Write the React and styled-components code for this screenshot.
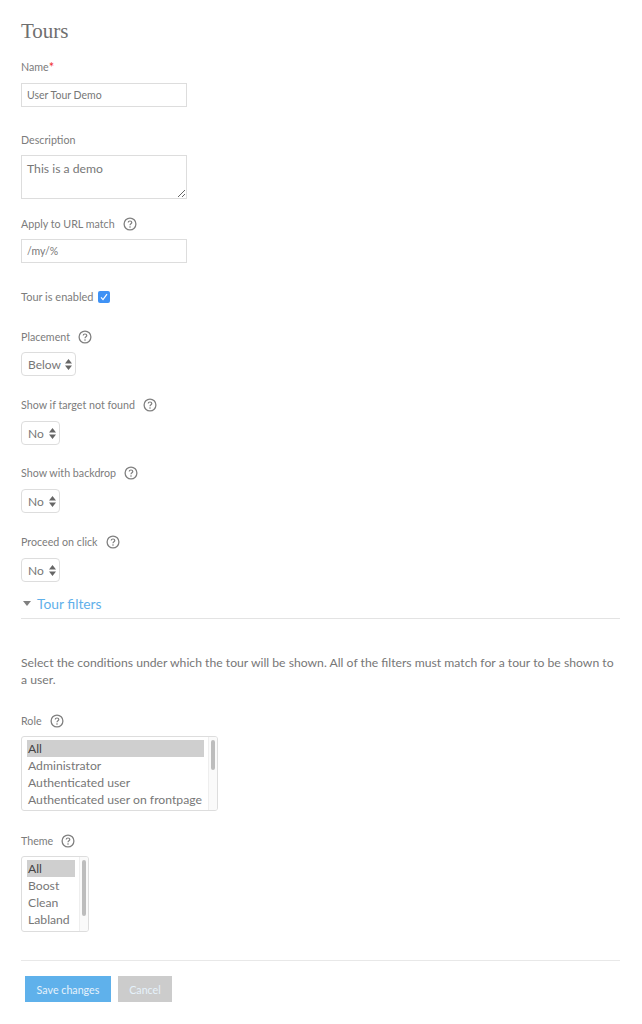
import React from "react";
import styled, { createGlobalStyle } from "styled-components";

const GlobalStyle = createGlobalStyle`
  html, body {
    margin: 0;
    background: #fff;
  }
  body {
    font-family: "Lato", "Noto Sans", sans-serif;
    color: #777;
  }
`;

const Page = styled.form`
  display: flex;
  flex-direction: column;
  width: 599px;
  height: 1024px;
  padding: 0 22px 0 21px;
  box-sizing: content-box;
  overflow: hidden;
`;

const Title = styled.h2`
  margin: 19px 0 0;
  font: 400 21px/24px "Liberation Serif", serif;
  color: #6f6f6f;
`;

const Field = styled.div`
  margin-top: ${(p) => p.$top}px;
`;

const LabelRow = styled.div`
  display: flex;
  align-items: center;
  height: 15px;
  margin-bottom: ${(p) => p.$gap ?? 9}px;
  font-size: 10.7px;
  color: #7c7c7c;
`;

const Required = styled.span`
  font-size: 13px;
  color: #f03030;
`;

const HelpIcon = styled.svg`
  width: 14px;
  height: 14px;
  margin-left: 8px;
  flex: none;
`;

const TextInput = styled.input`
  display: block;
  width: 166px;
  height: 24px;
  box-sizing: border-box;
  padding: 0 5px;
  border: 1px solid #ddd;
  border-radius: 0;
  outline: none;
  font: 10.5px "Lato", sans-serif;
  color: #777;
`;

const TextArea = styled.textarea`
  display: block;
  width: 166px;
  height: 44px;
  box-sizing: border-box;
  padding: 4px 5px;
  border: 1px solid #ddd;
  border-radius: 0;
  outline: none;
  font: 12.2px/18px "Lato", sans-serif;
  color: #777;
`;

const CheckRow = styled.div`
  display: flex;
  align-items: center;
  height: 15px;
  font-size: 11px;
  color: #7c7c7c;
`;

const CheckBox = styled.span`
  display: inline-flex;
  align-items: center;
  justify-content: center;
  width: 12px;
  height: 12px;
  margin-left: 5px;
  border-radius: 2px;
  background: #3f92f5;
`;

const SelectWrap = styled.div`
  position: relative;
  width: ${(p) => p.$width}px;
  height: 24px;
`;

const Select = styled.select`
  appearance: none;
  width: 100%;
  height: 100%;
  box-sizing: border-box;
  padding: 0 0 0 6px;
  border: 1px solid #ddd;
  border-radius: 4px;
  outline: none;
  background: #fff;
  font: 12px "Lato", sans-serif;
  color: #777;
`;

const SelectArrows = styled.svg`
  position: absolute;
  top: 7px;
  right: 4px;
  width: 7px;
  height: 11px;
  pointer-events: none;
`;

const SectionHeader = styled.div`
  display: flex;
  align-items: center;
  height: 20px;
  margin-top: 11px;
  padding-bottom: 5px;
  border-bottom: 1px solid #e3e3e3;
  font-size: 13.8px;
  color: #5fb0ea;
`;

const Caret = styled.span`
  width: 0;
  height: 0;
  margin: 0 6px 0 2px;
  border-left: 4.5px solid transparent;
  border-right: 4.5px solid transparent;
  border-top: 5px solid #808080;
`;

const Intro = styled.p`
  margin: 35px 0 0;
  font-size: 12.2px;
  line-height: 17px;
  color: #777;
`;

const ListBox = styled.div`
  display: flex;
  width: ${(p) => p.$width}px;
  height: ${(p) => p.$height}px;
  box-sizing: border-box;
  border: 1px solid #ddd;
  border-radius: 3px;
  overflow: hidden;
`;

const Options = styled.ul`
  flex: 1;
  min-width: 0;
  margin: 0;
  padding: 3px 4px 0 5px;
  list-style: none;
`;

const Option = styled.li`
  height: 17px;
  padding-left: 1px;
  font-size: 12.2px;
  line-height: 17px;
  white-space: nowrap;
  color: ${(p) => (p.$selected ? "#444" : "#777")};
  background: ${(p) => (p.$selected ? "#cfcfcf" : "transparent")};
`;

const ScrollTrack = styled.div`
  flex: none;
  width: 9px;
  padding: 3px 2px 0;
  box-sizing: border-box;
  background: #fafafa;
  border-left: 1px solid #eee;
`;

const ScrollThumb = styled.div`
  width: 4px;
  height: ${(p) => p.$height}px;
  border-radius: 2px;
  background: #bdbdbd;
`;

const Divider = styled.hr`
  width: 100%;
  margin: 28px 0 0;
  border: 0;
  border-top: 1px solid #e8e8e8;
`;

const Buttons = styled.div`
  display: flex;
  gap: 7px;
  margin: 15px 0 0 4px;
`;

const Button = styled.button`
  height: 26px;
  width: ${(p) => p.$width}px;
  padding: 0;
  border: 0;
  font: 10.7px "Lato", sans-serif;
  color: #e6f2fb;
  background: ${(p) => (p.$primary ? "#5fb1eb" : "#cccccc")};
`;

function Help() {
  return (
    <HelpIcon viewBox="0 0 14 14" fill="none">
      <circle cx="7" cy="7" r="5.9" stroke="#808080" strokeWidth="1.3" />
      <path
        d="M5.2 5.6c0-1 .8-1.6 1.8-1.6s1.8.6 1.8 1.5c0 1.3-1.8 1.3-1.8 2.7"
        stroke="#808080"
        strokeWidth="1.2"
      />
      <circle cx="7" cy="10" r=".8" fill="#808080" />
    </HelpIcon>
  );
}

function Dropdown({ value, width }) {
  return (
    <SelectWrap $width={width}>
      <Select defaultValue={value}>
        <option>{value}</option>
      </Select>
      <SelectArrows viewBox="0 0 7 11">
        <path d="M3.5 0 7 4.6H0z M3.5 11 0 6.4h7z" fill="#666" />
      </SelectArrows>
    </SelectWrap>
  );
}

function List({ items, width, height, thumb }) {
  return (
    <ListBox $width={width} $height={height}>
      <Options>
        {items.map((item, i) => (
          <Option key={item} $selected={i === 0}>
            {item}
          </Option>
        ))}
      </Options>
      <ScrollTrack>
        <ScrollThumb $height={thumb} />
      </ScrollTrack>
    </ListBox>
  );
}

export default function App() {
  return (
    <>
      <GlobalStyle />
      <Page onSubmit={(e) => e.preventDefault()}>
        <Title>Tours</Title>

        <Field $top={16}>
          <LabelRow>
            Name<Required>*</Required>
          </LabelRow>
          <TextInput defaultValue="User Tour Demo" />
        </Field>

        <Field $top={25}>
          <LabelRow $gap={8}>Description</LabelRow>
          <TextArea defaultValue="This is a demo" />
        </Field>

        <Field $top={17}>
          <LabelRow $gap={8}>
            Apply to URL match
            <Help />
          </LabelRow>
          <TextInput defaultValue="/my/%" />
        </Field>

        <Field $top={26}>
          <CheckRow>
            Tour is enabled
            <CheckBox>
              <svg width="8" height="8" viewBox="0 0 8 8" fill="none">
                <path d="M1 4.4 3 6.6 7 1.2" stroke="#fff" strokeWidth="1.2" />
              </svg>
            </CheckBox>
          </CheckRow>
        </Field>

        <Field $top={25}>
          <LabelRow $gap={8}>
            Placement
            <Help />
          </LabelRow>
          <Dropdown value="Below" width={55} />
        </Field>

        <Field $top={21}>
          <LabelRow>
            Show if target not found
            <Help />
          </LabelRow>
          <Dropdown value="No" width={39} />
        </Field>

        <Field $top={20}>
          <LabelRow>
            Show with backdrop
            <Help />
          </LabelRow>
          <Dropdown value="No" width={39} />
        </Field>

        <Field $top={21}>
          <LabelRow>
            Proceed on click
            <Help />
          </LabelRow>
          <Dropdown value="No" width={39} />
        </Field>

        <SectionHeader>
          <Caret />
          Tour filters
        </SectionHeader>

        <Intro>
          Select the conditions under which the tour will be shown. All of the filters must match
          for a tour to be shown to a user.
        </Intro>

        <Field $top={25}>
          <LabelRow $gap={8}>
            Role
            <Help />
          </LabelRow>
          <List
            width={197}
            height={75}
            thumb={30}
            items={["All", "Administrator", "Authenticated user", "Authenticated user on frontpage"]}
          />
        </Field>

        <Field $top={22}>
          <LabelRow $gap={8}>
            Theme
            <Help />
          </LabelRow>
          <List width={68} height={76} thumb={56} items={["All", "Boost", "Clean", "Labland"]} />
        </Field>

        <Divider />

        <Buttons>
          <Button $primary $width={86} type="submit">
            Save changes
          </Button>
          <Button $width={54} type="button">
            Cancel
          </Button>
        </Buttons>
      </Page>
    </>
  );
}
